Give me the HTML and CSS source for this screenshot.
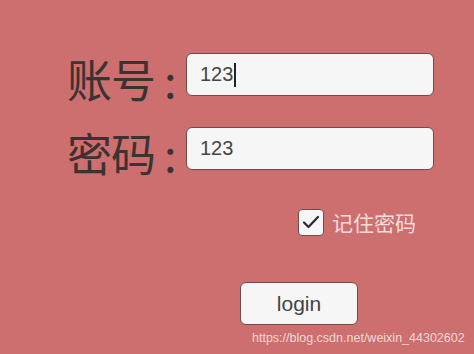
FILE: index.html
```html
<!DOCTYPE html>
<html>
<head>
<meta charset="utf-8">
<link rel="stylesheet" href="styles.css">
</head>
<body>
<div class="page">
  <div class="form">
    <div class="row">
      <div class="label">账号<span class="colon">:</span></div>
      <div class="input"><span class="val">123</span><span class="caret"></span></div>
    </div>
    <div class="row">
      <div class="label">密码<span class="colon">:</span></div>
      <div class="input"><span class="val">123</span></div>
    </div>
    <div class="remember">
      <div class="check">
        <svg width="18" height="16" viewBox="0 0 18 16"><path d="M2 8.5 L6.5 13 L16 3" fill="none" stroke="#2a2a2a" stroke-width="2.2" stroke-linecap="round" stroke-linejoin="round"/></svg>
      </div>
      <span class="rtext">记住密码</span>
    </div>
    <div class="btnrow">
      <div class="btn">login</div>
    </div>
  </div>
  <div class="watermark">https://blog.csdn.net/weixin_44302602</div>
</div>
</body>
</html>
```
FILE: styles.css
```css
html, body {
  margin: 0;
  padding: 0;
}
body {
  background: #cd6f6f;
  width: 474px;
  height: 354px;
  overflow: hidden;
  font-family: "Noto Sans CJK SC", "Liberation Sans", sans-serif;
}
.page {
  position: relative;
  width: 474px;
  height: 354px;
}
.form {
  display: flex;
  flex-direction: column;
  padding: 53px 0 0 67px;
}
.row {
  display: flex;
  align-items: center;
  height: 43px;
  margin-bottom: 31px;
}
.label {
  width: 119px;
  font-size: 45px;
  line-height: 43px;
  color: #3b3232;
  position: relative;
  top: 4px;
  white-space: nowrap;
  letter-spacing: -1px;
}
.colon {
  margin-left: 9px;
}
.input {
  box-sizing: border-box;
  width: 248px;
  height: 43px;
  background: #f6f6f6;
  border: 1.5px solid #6e4c4c;
  border-radius: 6px;
  display: flex;
  align-items: center;
  padding-left: 13px;
  font-family: "Liberation Sans", Arial, sans-serif;
  font-size: 20px;
  color: #444;
}
.caret {
  display: inline-block;
  width: 1.5px;
  height: 24px;
  background: #222;
  margin-left: 1px;
}
.remember {
  display: flex;
  align-items: center;
  margin: 6px 0 0 231px;
}
.check {
  box-sizing: border-box;
  width: 26px;
  height: 27px;
  border: 1.5px solid #6e4c4c;
  border-radius: 4px;
  background: #f6f6f6;
  display: flex;
  align-items: center;
  justify-content: center;
}
.rtext {
  margin-left: 8px;
  font-size: 21px;
  color: #f6dcdc;
}
.btnrow {
  display: flex;
  margin: 45px 0 0 173px;
}
.btn {
  box-sizing: border-box;
  width: 118px;
  height: 43px;
  background: #f6f6f6;
  border: 1.5px solid #6e4c4c;
  border-radius: 6px;
  display: flex;
  align-items: center;
  justify-content: center;
  font-family: "Liberation Sans", Arial, sans-serif;
  font-size: 21px;
  color: #444;
}
.watermark {
  position: absolute;
  left: 252px;
  top: 331px;
  font-family: "Liberation Sans", Arial, sans-serif;
  font-size: 12.5px;
  color: rgba(255, 235, 235, 0.85);
  white-space: nowrap;
}
```
